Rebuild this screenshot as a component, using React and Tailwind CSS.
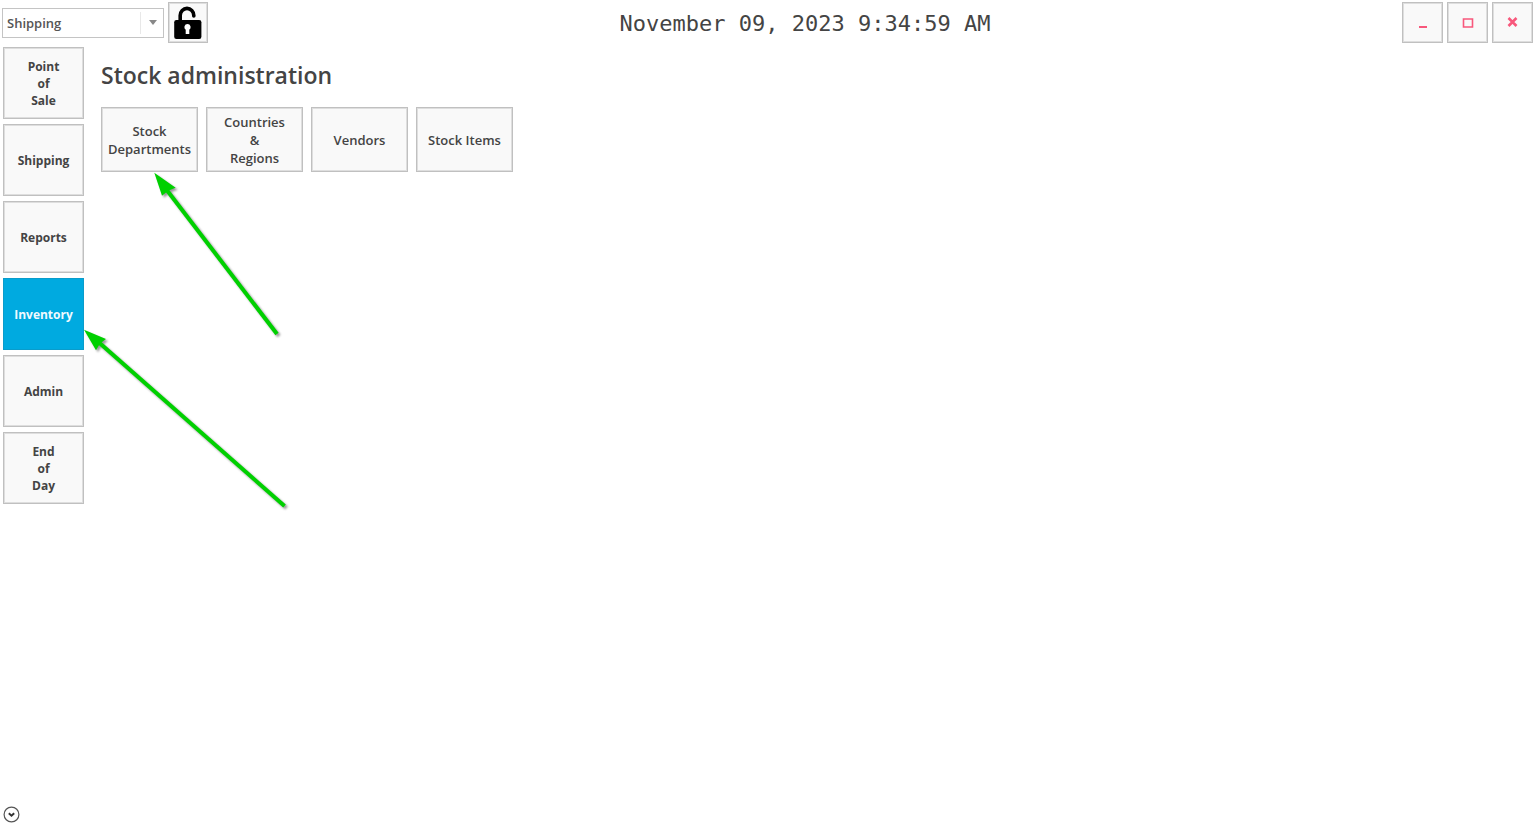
const menu = [
  { id: 'pos', lines: ['Point', 'of', 'Sale'] },
  { id: 'shipping', lines: ['Shipping'] },
  { id: 'reports', lines: ['Reports'] },
  { id: 'inventory', lines: ['Inventory'] },
  { id: 'admin', lines: ['Admin'] },
  { id: 'eod', lines: ['End', 'of', 'Day'] },
]

const tiles = [
  ['Stock', 'Departments'],
  ['Countries', '&', 'Regions'],
  ['Vendors'],
  ['Stock Items'],
]

const frame = 'border border-[#c0c0c0] bg-[#f9f9f9] shadow-[inset_0_0_0_1px_#dedede]'

const Lines = ({ lines }) => lines.map((line) => (
  <span key={line} className="block whitespace-nowrap">{line}</span>
))

const LockIcon = () => (
  <svg width="28" height="34" viewBox="0 0 28 34">
    <path d="M6.2 16V9.4a6.8 7 0 0 1 13.6 0V10" fill="none" stroke="#000" strokeWidth="3.6" strokeLinecap="round" />
    <rect x="0.2" y="14" width="27.2" height="19" rx="2.2" fill="#000" />
    <path d="M13.5 18a3.2 3.2 0 0 1 1.8 5.8V28h-3.6v-4.2A3.2 3.2 0 0 1 13.5 18z" fill="#fff" />
  </svg>
)

const WindowButton = ({ label, children }) => (
  <button
    type="button"
    aria-label={label}
    className={`flex size-[41px] items-center justify-center ${frame}`}
  >
    <svg width="12" height="12" viewBox="0 0 12 12" fill="none" stroke="#f8587c">
      {children}
    </svg>
  </button>
)

const Header = () => (
  <header className="flex items-start gap-1 pt-0.5 pr-[3px] pl-0.5">
    <div className="relative mt-1.5 h-[30px] w-[162px]">
      <select
        aria-label="Department"
        defaultValue="Shipping"
        className="size-full appearance-none border border-[#c4c4c4] bg-white px-1 pt-0.5 text-[13px] font-semibold text-[#555555]"
      >
        <option>Shipping</option>
        <option>Point of Sale</option>
      </select>
      <span className="pointer-events-none absolute inset-y-1 right-0 flex w-6 justify-center border-l border-[#e8e8e8] pt-2">
        <svg width="8" height="5" viewBox="0 0 8 5">
          <path d="M0 0h8L4 5z" fill="#888888" />
        </svg>
      </span>
    </div>

    <button
      type="button"
      aria-label="Unlock"
      className={`flex h-[41px] w-10 items-center justify-center ${frame}`}
    >
      <LockIcon />
    </button>

    <p className="flex-1 pt-2 text-center font-['DejaVu_Sans_Mono',monospace] text-[22px] leading-7 text-[#444444]">
      November 09, 2023 9:34:59 AM
    </p>

    <WindowButton label="Minimize"><path d="M2 10h8" strokeWidth="2" /></WindowButton>
    <WindowButton label="Maximize"><path d="M1.5 2h9v8h-9z" strokeWidth="1.6" /></WindowButton>
    <WindowButton label="Close"><path d="M1.5 1l8 8M9.5 1l-8 8" strokeWidth="2.6" /></WindowButton>
  </header>
)

// Help arrows drawn over the screen: Stock Departments, then Inventory
const GuideArrows = () => (
  <svg
    width="300"
    height="520"
    viewBox="0 0 300 520"
    aria-hidden="true"
    className="pointer-events-none absolute top-0 left-0 drop-shadow-[2px_2px_1px_rgba(0,0,0,0.4)]"
  >
    <g fill="#00d000" stroke="#00d000">
      <path d="M166 189L277 334" strokeWidth="4" />
      <path d="M154.3 172.7L175.7 187.7L168.5 190.5L162 195.7z" stroke="none" />
      <path d="M99 342.5L284.5 506" strokeWidth="4" />
      <path d="M84 329.7L106 339L100 343.5L96 350.3z" stroke="none" />
    </g>
  </svg>
)

const App = () => (
  <div className="relative flex min-h-screen flex-col bg-white font-['Open_Sans',sans-serif] text-[#444444]">
    <Header />

    <div className="flex flex-1 gap-[17px] px-[3px] pt-1">
      <nav className="flex w-[81px] flex-col gap-[5px]">
        {menu.map(({ id, lines }) => (
          <button
            key={id}
            type="button"
            className={`h-[72px] text-xs leading-[17px] font-bold ${
              id === 'inventory'
                ? 'border border-[#0a9ccb] bg-[#00aae0] text-[#f0faff]'
                : frame
            }`}
          >
            <Lines lines={lines} />
          </button>
        ))}
      </nav>

      <main className="flex-1 pt-3">
        <h1 className="text-[23px] leading-8 font-semibold">Stock administration</h1>
        <div className="mt-4 flex flex-wrap gap-2">
          {tiles.map((lines) => (
            <button
              key={lines[0]}
              type="button"
              className={`h-[65px] w-[97px] text-[13px] leading-[18px] font-semibold ${frame}`}
            >
              <Lines lines={lines} />
            </button>
          ))}
        </div>
      </main>
    </div>

    <footer className="flex px-[3px] pb-1">
      <button type="button" aria-label="Show more" className="size-[17px]">
        <svg width="17" height="17" viewBox="0 0 17 17" fill="none">
          <circle cx="8.5" cy="8.5" r="7.4" stroke="#555555" strokeWidth="1.2" />
          <path d="M5.8 7.2l2.7 2.6 2.7-2.6" stroke="#333333" strokeWidth="1.9" />
        </svg>
      </button>
    </footer>

    <GuideArrows />
  </div>
)

export default App
